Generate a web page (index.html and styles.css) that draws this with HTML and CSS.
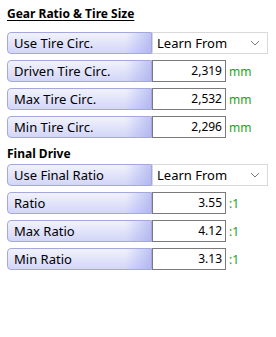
FILE: index.html
```html
<!DOCTYPE html>
<html>
<head>
	<title>Gear Ratio</title>
<link rel="stylesheet" href="styles.css">
</head>
<body>

<div class="panel">
	<div class="heading first">Gear Ratio &amp; Tire Size</div>

	<div class="row">
		<div class="label">Use Tire Circ.</div>
		<div class="select">Learn From<span class="chev"><svg width="10" height="6" viewBox="0 0 10 6"><path d="M1 1 L5 5 L9 1" fill="none" stroke="#7a7a7a" stroke-width="1"/></svg></span></div>
	</div>
	<div class="row">
		<div class="label">Driven Tire Circ.</div>
		<div class="value">2,319</div><div class="unit">mm</div>
	</div>
	<div class="row">
		<div class="label">Max Tire Circ.</div>
		<div class="value">2,532</div><div class="unit">mm</div>
	</div>
	<div class="row">
		<div class="label">Min Tire Circ.</div>
		<div class="value">2,296</div><div class="unit">mm</div>
	</div>

	<div class="heading">Final Drive</div>

	<div class="row">
		<div class="label">Use Final Ratio</div>
		<div class="select">Learn From<span class="chev"><svg width="10" height="6" viewBox="0 0 10 6"><path d="M1 1 L5 5 L9 1" fill="none" stroke="#7a7a7a" stroke-width="1"/></svg></span></div>
	</div>
	<div class="row">
		<div class="label">Ratio</div>
		<div class="value">3.55</div><div class="unit">:1</div>
	</div>
	<div class="row">
		<div class="label">Max Ratio</div>
		<div class="value">4.12</div><div class="unit">:1</div>
	</div>
	<div class="row">
		<div class="label">Min Ratio</div>
		<div class="value">3.13</div><div class="unit">:1</div>
	</div>
</div>

</body>
</html>
```

FILE: styles.css
```css
	body {
		margin:0;
		background-color:white;
		font-family:"Noto Sans", "Open Sans", sans-serif;
		font-size:12px;
		color:black;}

	.panel {
		padding:4px 0 0 7px;
		display:flex;
		flex-direction:column;}

	.heading {
		font-weight:bold;
		height:20px;
		line-height:20px;}

	.heading.first {
		text-decoration:underline;
		text-underline-offset:2px;
		margin-bottom:8px;}

	.row {
		display:flex;
		align-items:center;
		height:22px;
		margin-bottom:6px;}

	.label {
		width:145px;
		height:22px;
		box-sizing:border-box;
		border:1px solid #a4a8dc;
		border-radius:4px 0 0 4px;
		padding-left:6px;
		font-size:13px;
		line-height:20px;
		background:linear-gradient(to right, rgba(255,255,255,0) 82%, rgba(150,158,235,0.55) 100%),
			linear-gradient(to bottom, #f1f2fd 0%, #e2e4fa 50%, #d3d6f7 100%);}

	.value {
		width:74px;
		height:22px;
		box-sizing:border-box;
		border:1px solid #7a7a7a;
		text-align:right;
		padding-right:3px;
		font-size:12px;
		line-height:20px;
		background-color:white;}

	.unit {
		color:#1e9e1e;
		font-size:12px;
		padding-left:3px;}

	.select {
		width:116px;
		height:22px;
		box-sizing:border-box;
		border:1px solid #d9d9d9;
		display:flex;
		align-items:center;
		padding-left:4px;
		font-size:13px;
		background-color:white;}

	.chev {
		margin-left:auto;
		width:24px;
		display:flex;
		justify-content:center;
		align-items:center;}
```
